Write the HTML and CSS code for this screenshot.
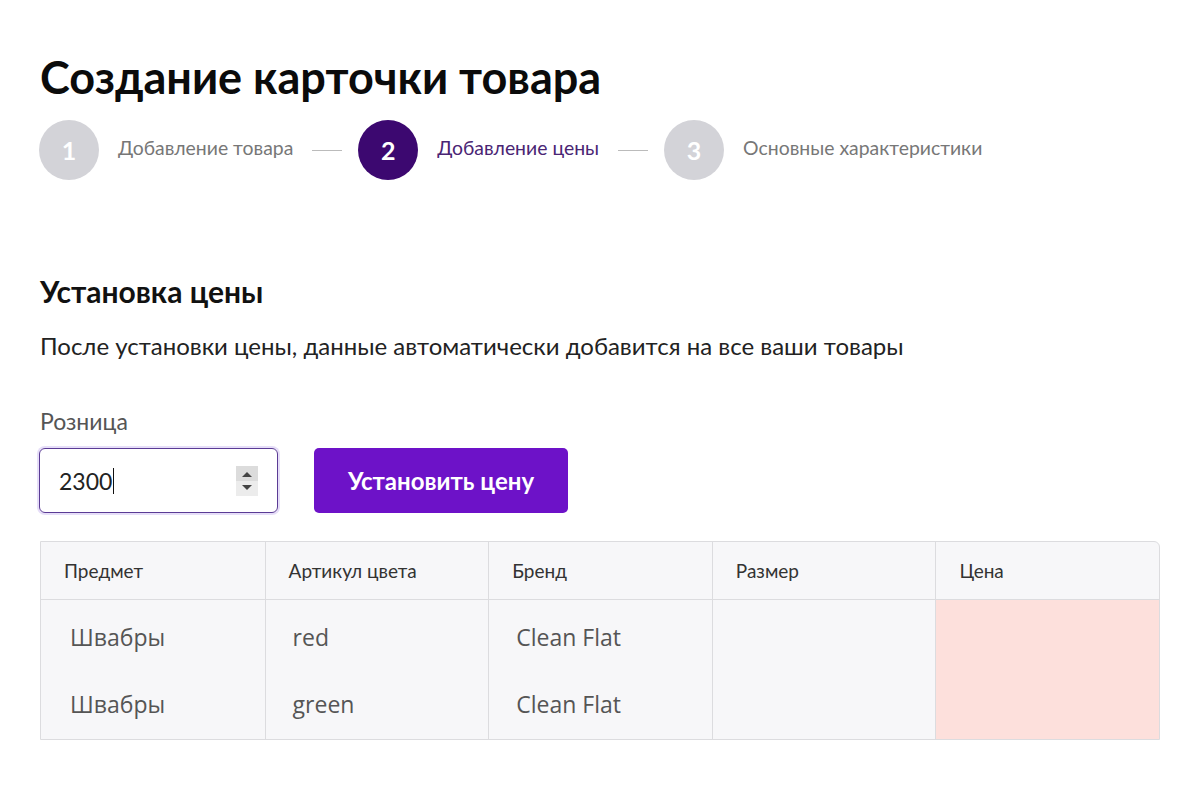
FILE: index.html
```html
<!DOCTYPE html>
<html lang="ru">
<head>
    <meta charset="UTF-8">
    <meta name="viewport" content="width=device-width, initial-scale=1.0">
    <title>Создание карточки товара</title>
    <link rel="stylesheet" href="styles.css">
</head>
<body>

    <div class="page">
        <h1 class="title">Создание карточки товара</h1>

        <div class="steps">
            <div class="step done">
                <span class="step-num">1</span>
                <span class="step-label">Добавление товара</span>
            </div>
            <span class="step-line"></span>
            <div class="step active">
                <span class="step-num">2</span>
                <span class="step-label">Добавление цены</span>
            </div>
            <span class="step-line"></span>
            <div class="step">
                <span class="step-num">3</span>
                <span class="step-label">Основные характеристики</span>
            </div>
        </div>

        <h2 class="section-title">Установка цены</h2>
        <p class="section-desc">После установки цены, данные автоматически добавится на все ваши товары</p>

        <label class="field-label" for="price">Розница</label>
        <div class="price-row">
            <div class="price-input">
                <span class="price-value">2300<span class="caret"></span></span>
                <span class="spinner">
                    <svg width="22" height="30" viewBox="0 0 22 30">
                        <rect x="0" y="0" width="22" height="15" fill="#dcdcdc"/>
                        <rect x="0" y="15" width="22" height="15" fill="#ececec"/>
                        <path d="M6 11 L11 6 L16 11 Z" fill="#444"/>
                        <path d="M6 19 L16 19 L11 24 Z" fill="#444"/>
                    </svg>
                </span>
            </div>
            <button class="btn-primary">Установить цену</button>
        </div>

        <div class="table">
            <div class="row head">
                <div class="cell">Предмет</div>
                <div class="cell">Артикул цвета</div>
                <div class="cell">Бренд</div>
                <div class="cell">Размер</div>
                <div class="cell">Цена</div>
            </div>
            <div class="row body">
                <div class="cell">
                    <span>Швабры</span>
                    <span>Швабры</span>
                </div>
                <div class="cell">
                    <span>red</span>
                    <span>green</span>
                </div>
                <div class="cell">
                    <span>Clean Flat</span>
                    <span>Clean Flat</span>
                </div>
                <div class="cell"></div>
                <div class="cell price-cell"></div>
            </div>
        </div>
    </div>

</body>
</html>
```

FILE: styles.css
```css
body {
    margin: 0;
    background: #fff;
    font-family: Lato, "Open Sans", sans-serif;
    color: #111;
}
.page {
    padding: 49px 40px 0 40px;
}
.title {
    margin: 0;
    font-size: 45px;
    font-weight: 700;
    line-height: 56px;
    color: #0b0b0b;
}
.steps {
    display: flex;
    align-items: center;
    margin-top: 15px;
    margin-left: -1px;
}
.step {
    display: flex;
    align-items: center;
    gap: 19px;
}
.step-num {
    width: 60px;
    height: 60px;
    border-radius: 50%;
    background: #d3d3d8;
    color: #fff;
    display: flex;
    align-items: center;
    justify-content: center;
    font-size: 25px;
    font-weight: 700;
}
.step-label {
    font-size: 19.4px;
    color: #777;
    margin-bottom: 5px;
}
.step.active .step-num {
    background: #3c0870;
}
.step.active .step-label {
    color: #4a2574;
}
.step-line {
    width: 30px;
    height: 1px;
    background: #bbb;
    margin: 0 16px 0 19px;
}
.section-title {
    margin: 93px 0 0 0;
    font-size: 30px;
    font-weight: 700;
    line-height: 36px;
    color: #111;
}
.section-desc {
    margin: 22px 0 0 0;
    font-size: 24px;
    line-height: 30px;
    color: #222;
}
.field-label {
    display: block;
    margin-top: 46px;
    font-size: 23px;
    line-height: 28px;
    color: #555;
}
.price-row {
    display: flex;
    gap: 36px;
    margin-top: 13px;
}
.price-input {
    width: 239px;
    height: 65px;
    box-sizing: border-box;
    margin-left: -1px;
    border: 1.5px solid #5b3b95;
    border-radius: 6px;
    box-shadow: 0 0 0 2px #e6def8;
    display: flex;
    align-items: center;
    justify-content: space-between;
    padding: 0 19px 0 19px;
}
.price-value {
    font-size: 23px;
    color: #222;
    display: flex;
    align-items: center;
}
.caret {
    display: inline-block;
    width: 1px;
    height: 26px;
    background: #111;
    margin-left: 1px;
}
.spinner {
    display: flex;
}
.btn-primary {
    width: 254px;
    height: 65px;
    border: none;
    border-radius: 5px;
    background: #6d12c8;
    color: #fff;
    font-family: Lato, sans-serif;
    font-size: 24px;
    font-weight: 700;
    cursor: pointer;
}
.table {
    margin-top: 28px;
    border: 1px solid #dcdcdf;
    border-radius: 0 6px 0 0;
    overflow: hidden;
    background: #f7f7f9;
}
.row {
    display: grid;
    grid-template-columns: repeat(5, 1fr);
}
.row.head {
    height: 57px;
    border-bottom: 1px solid #dcdcdf;
}
.row.head .cell {
    padding-left: 23px;
    display: flex;
    align-items: center;
    font-size: 19px;
    color: #333;
}
.cell {
    border-left: 1px solid #dcdcdf;
}
.cell:first-child {
    border-left: none;
}
.row.body {
    height: 139px;
}
.row.body .cell {
    display: flex;
    flex-direction: column;
    gap: 37px;
    padding: 22px 0 0 27px;
    font-family: "Open Sans", sans-serif;
    font-size: 23px;
    line-height: 30px;
    color: #555;
}
.row.body .cell:first-child {
    padding-left: 29px;
}
.price-cell {
    background: #fde0dc;
}
```
